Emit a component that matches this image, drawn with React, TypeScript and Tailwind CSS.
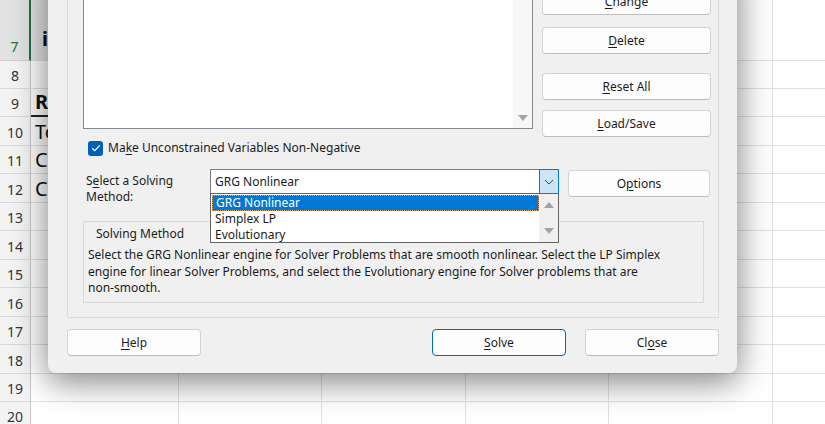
import React from 'react';

const colWidths = ['w-[148px]', 'w-[143px]', 'w-[144px]', 'w-[143px]', 'w-[164px]', 'w-[60px]'];

type SheetRow = { n: string; h: string; text?: string; bold?: boolean; edge?: boolean };

const sheetRows: SheetRow[] = [
  { n: '8', h: 'h-[28px]' },
  { n: '9', h: 'h-[28px]', text: 'R', bold: true, edge: true },
  { n: '10', h: 'h-[29px]', text: 'To' },
  { n: '11', h: 'h-[28px]', text: 'Ca' },
  { n: '12', h: 'h-[29px]', text: 'Ca' },
  { n: '13', h: 'h-[28px]' },
  { n: '14', h: 'h-[29px]' },
  { n: '15', h: 'h-[28px]' },
  { n: '16', h: 'h-[29px]' },
  { n: '17', h: 'h-[28px]' },
  { n: '18', h: 'h-[29px]' },
  { n: '19', h: 'h-[28px]' },
  { n: '20', h: 'h-[28px]' },
];

function U({ children }: { children: React.ReactNode }) {
  return <span className="underline underline-offset-[2px] decoration-[1px]">{children}</span>;
}

function Btn({ children, className = '', primary = false }: { children: React.ReactNode; className?: string; primary?: boolean }) {
  return (
    <div
      className={`flex h-[27px] items-center justify-center rounded-[4px] border bg-[#fdfdfd] text-[12px] text-[#1b1b1b] ${
        primary ? 'border-[#0067c0]' : 'border-[#d3d3d3] border-b-[#bdbdbd]'
      } ${className}`}
    >
      {children}
    </div>
  );
}

function Tri({ up }: { up?: boolean }) {
  return (
    <svg width="10" height="6" viewBox="0 0 10 6">
      <path d={up ? 'M0 6 L5 0 L10 6 Z' : 'M0 0 L5 6 L10 0 Z'} fill="#a3a3a3" />
    </svg>
  );
}

function Sheet() {
  return (
    <div className="flex flex-col">
      <div className="flex h-[61px]">
        <div className="flex w-[31px] shrink-0 items-end justify-center border-r-2 border-b border-r-[#217346] border-b-[#d0d0d0] bg-[#e2e2e2] pb-[3px] text-[14px] text-[#217346]">
          7
        </div>
        {colWidths.map((w, i) => (
          <div
            key={i}
            className={`${w} shrink-0 border-r border-b border-[#e1e1e1] ${i === 0 ? 'bg-[#e4e4e4]' : 'bg-white'} flex items-center pl-[11px] pt-[18px]`}
          >
            {i === 0 && <span className="text-[20px] font-bold text-[#111]">i</span>}
          </div>
        ))}
      </div>
      {sheetRows.map((r) => (
        <div key={r.n} className={`flex ${r.h}`}>
          <div className="flex w-[31px] shrink-0 items-end justify-center border-r border-b border-r-[#c8c8c8] border-b-[#dadada] bg-[#f3f3f3] pb-[2px] text-[14px] text-[#333]">
            {r.n}
          </div>
          {colWidths.map((w, i) => (
            <div
              key={i}
              className={`${w} shrink-0 border-r border-[#e1e1e1] ${i === 0 && r.edge ? 'border-b-2 border-b-[#222]' : 'border-b'} flex items-end pl-[4px]`}
            >
              {i === 0 && r.text && (
                <span className={`text-[20px] leading-[26px] text-[#111] ${r.bold ? 'font-bold' : ''}`}>{r.text}</span>
              )}
            </div>
          ))}
        </div>
      ))}
    </div>
  );
}

function SolverDialog() {
  return (
    <div className="absolute left-[48px] top-[-40px] flex h-[413px] w-[689px] flex-col rounded-b-[8px] bg-[#f0f0f0] pl-[19px] pr-[18px] shadow-[0_10px_30px_rgba(0,0,0,0.36),0_0_44px_rgba(0,0,0,0.2)]">
      {/* framed area */}
      <div className="flex h-[358px] flex-col border-x border-b border-[#dcdcdc] pl-[15px] pr-[7px]">
        <div className="flex items-start gap-[9px] pt-[16px]">
          {/* constraint list */}
          <div className="flex h-[153px] w-[450px] border border-t-0 border-[#828790] bg-white">
            <div className="flex-1" />
            <div className="flex w-[19px] flex-col items-center justify-end bg-[#f7f7f7] pb-[7px]">
              <Tri />
            </div>
          </div>
          <div className="flex w-[169px] flex-col pt-[12px]">
            <Btn>
              <U>C</U>hange
            </Btn>
            <Btn className="mt-[12px]">
              <U>D</U>elete
            </Btn>
            <Btn className="mt-[19px]">
              <U>R</U>eset All
            </Btn>
            <Btn className="mt-[10px]">
              <U>L</U>oad/Save
            </Btn>
          </div>
        </div>

        {/* checkbox */}
        <div className="mt-[2px] flex items-center pl-[5px]">
          <div className="flex h-[15px] w-[15px] items-center justify-center rounded-[3px] bg-[#005fb8]">
            <svg width="10" height="8" viewBox="0 0 10 8">
              <path d="M1.2 4.2 L3.8 6.6 L8.8 1.4" fill="none" stroke="white" strokeWidth="1.2" />
            </svg>
          </div>
          <span className="ml-[5px] text-[12px] text-[#1b1b1b]">
            Ma<U>k</U>e Unconstrained Variables Non-Negative
          </span>
        </div>

        {/* solving method row */}
        <div className="mt-[12px] flex items-start">
          <div className="mt-[4px] w-[127px] pl-[3px] text-[12px] leading-[16px] text-[#1b1b1b]">
            S<U>e</U>lect a Solving
            <br />
            Method:
          </div>
          <div className="relative">
            <div className="flex h-[25px] w-[349px] items-center border border-[#7a7a7a] bg-white">
              <span className="flex-1 pl-[4px] text-[12px] text-[#1b1b1b]">GRG Nonlinear</span>
              <div className="flex h-[25px] w-[20px] -mr-px items-center justify-center border border-[#0078d4] bg-[#cce4f7]">
                <svg width="10" height="6" viewBox="0 0 10 6">
                  <path d="M1 1 L5 5 L9 1" fill="none" stroke="#444" strokeWidth="1" />
                </svg>
              </div>
            </div>
            {/* open dropdown list */}
            <div className="absolute left-0 top-[24px] z-10 flex h-[50px] w-[349px] border border-[#646464] bg-white">
              <div className="flex flex-1 flex-col pt-[1px] pl-[1px] text-[12px] leading-[16px] text-[#1b1b1b]">
                <div className="h-[16px] border border-dotted border-[#e8a060] bg-[#0078d7] pl-[3px] leading-[14px] text-white">
                  GRG Nonlinear
                </div>
                <div className="pl-[3px]">Simplex LP</div>
                <div className="pl-[3px]">Evolutionary</div>
              </div>
              <div className="flex w-[19px] flex-col items-center justify-between bg-[#f0f0f0] py-[8px]">
                <Tri up />
                <Tri />
              </div>
            </div>
          </div>
          <Btn className="ml-[9px] mt-[1px] w-[142px]">
            O<U>p</U>tions
          </Btn>
        </div>

        {/* solving method group */}
        <div className="mt-[16px] h-[82px] w-[621px] border border-[#dadada] px-[4px]">
          <div className="pl-[8px] pt-[4px] text-[12px] leading-[16px] text-[#1b1b1b]">Solving Method</div>
          <div className="mt-[5px] whitespace-nowrap text-[12px] leading-[16.5px] text-[#1b1b1b]">
            Select the GRG Nonlinear engine for Solver Problems that are smooth nonlinear. Select the LP Simplex
            <br />
            engine for linear Solver Problems, and select the Evolutionary engine for Solver problems that are
            <br />
            non-smooth.
          </div>
        </div>
      </div>

      {/* bottom buttons */}
      <div className="mt-[11px] flex items-center">
        <Btn className="w-[134px]">
          <U>H</U>elp
        </Btn>
        <div className="flex-1" />
        <Btn primary className="w-[134px]">
          <U>S</U>olve
        </Btn>
        <Btn className="ml-[19px] w-[134px]">
          Cl<U>o</U>se
        </Btn>
      </div>
    </div>
  );
}

export default function App() {
  return (
    <div className="relative h-[424px] w-[825px] overflow-hidden bg-white font-['Noto_Sans',sans-serif]">
      <Sheet />
      <SolverDialog />
    </div>
  );
}
